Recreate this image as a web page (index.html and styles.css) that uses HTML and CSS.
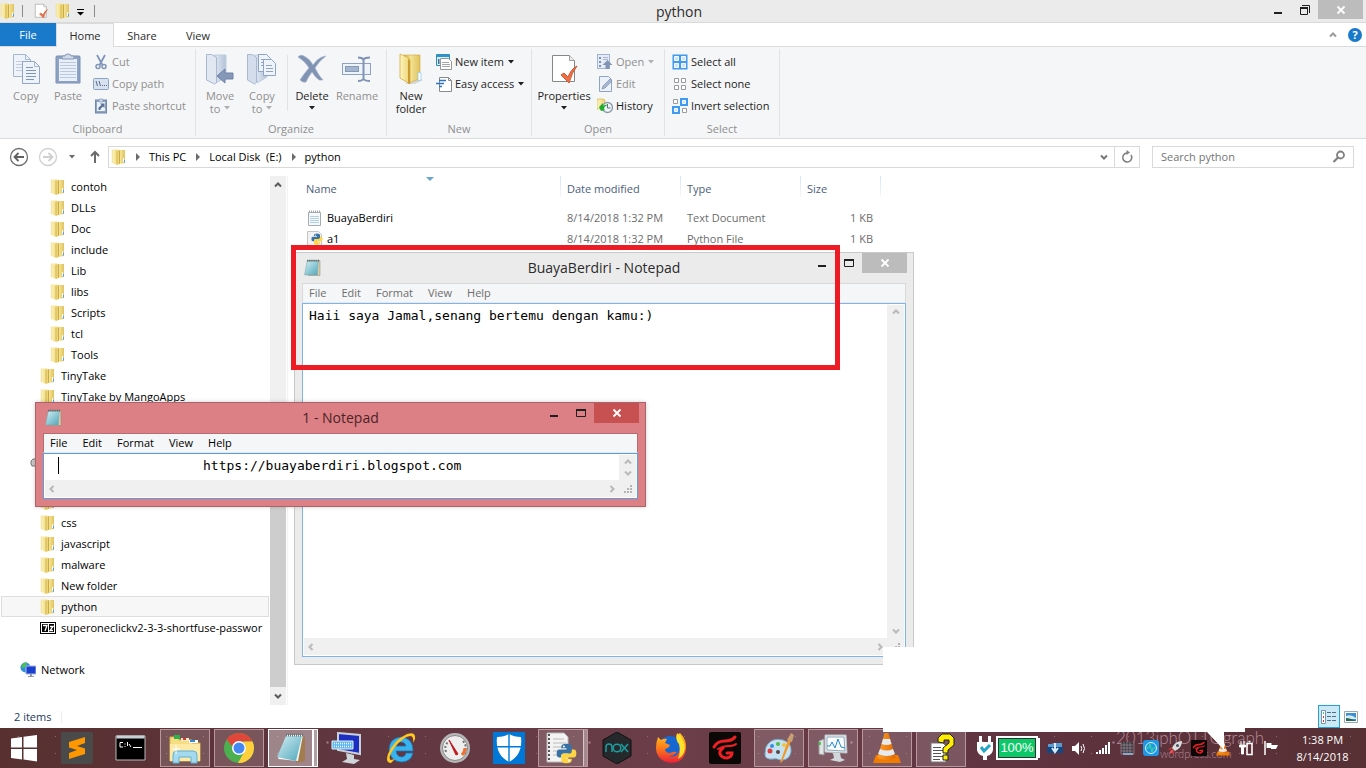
FILE: index.html
```html
<!DOCTYPE html>
<html lang="en">
<head>
<meta charset="utf-8">
<title>python</title>
<link rel="stylesheet" href="styles.css">
</head>
<body>
<svg class="sprite" aria-hidden="true">
  <defs>
    <linearGradient id="gold" x1="0" x2="1"><stop offset="0" stop-color="#fdf5bd"/><stop offset="1" stop-color="#ecd273"/></linearGradient>
    <linearGradient id="gold2" x1="0" x2="1"><stop offset="0" stop-color="#dcbb55"/><stop offset=".4" stop-color="#f4e494"/><stop offset="1" stop-color="#e0c25e"/></linearGradient>
    <linearGradient id="haze" x1="0" x2="1"><stop offset="0" stop-color="#e3eaf4"/><stop offset="1" stop-color="#b4c3d8"/></linearGradient>
    <linearGradient id="glass" x1="0" y1="0" x2="1" y2="1"><stop offset="0" stop-color="#d3f0f5"/><stop offset="1" stop-color="#4fa6ba"/></linearGradient>
    <linearGradient id="cone" x1="0" x2="1"><stop offset="0" stop-color="#ffa02a"/><stop offset="1" stop-color="#e06a00"/></linearGradient>
    <linearGradient id="fire" x1="0" y1="0" x2="0" y2="1"><stop offset="0" stop-color="#ffcf22"/><stop offset=".5" stop-color="#ff7a1a"/><stop offset="1" stop-color="#e8203a"/></linearGradient>
  </defs>
  <symbol id="folder" viewBox="0 0 16 16"><path d="M6 1h8v13l-6 1z" fill="url(#gold2)"/><path d="M1 .5h6l1 1v14l-2 .5-5-2z" fill="url(#gold)"/><path d="M1.200.5v13.500" stroke="#e3cd80" stroke-width=".5"/><path d="M5.500 2h1v13.500l-1-.5z" fill="#d4b54d"/><path d="M8 1.500h1v13l-1 .5z" fill="#cbaa45"/><path d="M12 9h1v4h-1z" fill="#fff"/><path d="M13 11h1v2.500h-1z" fill="#4aa5e0"/></symbol>
  <symbol id="bigfolder" viewBox="0 0 32 32"><path d="M20 24l8 3-8 4-10 0z" fill="#000" opacity=".12"/><path d="M9 2h16v24l-12 4z" fill="url(#gold2)" stroke="#cfa43a" stroke-width=".6"/><path d="M5 1l9 4 1 3v23L5 25z" fill="url(#gold)" stroke="#d3ab41" stroke-width=".8"/><path d="M13 6l2 2v23l-2-1z" fill="#c89a30"/><path d="M23 19l3 1v7l-3 1z" fill="#fff" stroke="#8ac5ee" stroke-width=".7"/></symbol>
  <symbol id="copy" viewBox="0 0 32 32"><g fill="#eef3fa" stroke="#a5b6d0"><path d="M3.500 1.500h12l5 5v17h-17z"/><path d="M15.500 1.500v5h5" fill="none"/><path d="M6 8.500h8M6 11.500h8M6 14.500h8M6 17.500h8" stroke="#c3cfe1"/><path d="M12.500 8.500h12l5 5v17h-17z" stroke="#93a7c5"/><path d="M24.500 8.500v5h5" fill="none"/><path d="M16 14.500h7M16 17.500h10M16 20.500h10M16 23.500h10M16 26.500h8" stroke="#8095b8"/></g></symbol>
  <symbol id="paste" viewBox="0 0 32 32"><path d="M5 3h22q1 0 1 1v26H4V4q0-1 1-1z" fill="#8ea3c3" stroke="#7b91b5"/><path d="M7 6h18v22H7z" fill="#e9eff8"/><path d="M8 9.500h16M8 12.500h16M8 15.500h16M8 18.500h16M8 21.500h16M8 24.500h16" stroke="#bcc9dd"/><path d="M10 6V3h3q0-2 3-2t3 2h3v3z" fill="#d2dbea" stroke="#8296b8"/></symbol>
  <symbol id="cut" viewBox="0 0 16 16"><g fill="none" stroke="#8095b8"><path d="M4 1l5.500 10M12 1L6.500 11" stroke-width="1.800"/><circle cx="5" cy="12.500" r="2" stroke-width="1.500"/><circle cx="11" cy="12.500" r="2" stroke-width="1.500"/></g></symbol>
  <symbol id="path" viewBox="0 0 16 16"><rect x=".5" y="2.500" width="15" height="11" rx="1" fill="#d8e1ee" stroke="#8da1c2"/><path d="M3 5l1.500 5M6 5l1.500 5" stroke="#556b91"/><path d="M9 9.500h1M11 9.500h1M13 9.500h1" stroke="#556b91"/></symbol>
  <symbol id="shortcut" viewBox="0 0 16 16"><rect x="2.500" y="2" width="11" height="13" fill="#8ea3c3" stroke="#7188ad"/><path d="M4 4h8v9H4z" fill="#edf2f9"/><path d="M6 1h4v3H6z" fill="#c6d2e4" stroke="#8095b8" stroke-width=".6"/><path d="M5.500 12V9.500L8.500 7 7 5.500h4.500V10L10 8.500 7.500 11v1z" fill="#5b7299"/></symbol>
  <symbol id="moveto" viewBox="0 0 32 32"><path d="M10 2h12v22l-10 6z" fill="url(#haze)" stroke="#c0ccde"/><path d="M2.500 1.500h5l5 3v25l-2 1.500-8-4z" fill="#e1e8f2" stroke="#a9b9d1"/><path d="M13 23l8-7v4h8v6h-8v4z" fill="#8598b8" stroke="#6c82a8"/></symbol>
  <symbol id="copyto" viewBox="0 0 32 32"><path d="M9 2h12v22l-10 6z" fill="url(#haze)" stroke="#c0ccde"/><path d="M1.500 1.500h5l4 3v25l-2 1.500-7-4z" fill="#d3ddeb" stroke="#a9b9d1"/><g fill="#eff4fa" stroke="#8fa3c2"><path d="M12.500 1.500h8l4 4v13h-12z"/><path d="M15 6.500h6M15 9.500h7M15 12.500h7"/><path d="M17.500 6.500h8l4 4v12h-12z"/><path d="M20 12.500h6M20 15.500h7M20 18.500h7"/></g></symbol>
  <symbol id="delete" viewBox="0 0 32 32"><path d="M2 4q2-3 6-1 6 3 9 9 4-6 9-8l4-1q-7 5-11 12 4 8 8 12l-4 0q-4-3-7-8-4 5-6 10-3 1-6-2 3-5 9-12Q9 8 2 4z" fill="#8093b3" stroke="#a3b2ca" stroke-width=".7"/></symbol>
  <symbol id="rename" viewBox="0 0 32 32"><rect x="1.500" y="10.500" width="28" height="11" fill="#eef3fa" stroke="#8ea1c0"/><rect x="4.500" y="13.500" width="13" height="5" fill="#a4b5cf" stroke="#8397b7"/><path d="M17 4.500q4 0 5.500 2 1.500-2 6.500-2M22.500 5v22M17 28q4 0 5.500-2 1.500 2 6.500 2" fill="none" stroke="#7f93b5" stroke-width="2"/></symbol>
  <symbol id="newitem" viewBox="0 0 16 16"><path d="M.5.500h13v11H.5z" fill="#d8eef8" stroke="#2d8cc0"/><path d="M1 1h12v2H1z" fill="#2f94c9"/><path d="M4.500 4.500h8l3 3v8h-11z" fill="#fff" stroke="#979797"/><path d="M6 8.500h7M6 10.500h8M6 12.500h8" stroke="#8f8f8f" stroke-width=".8"/><path d="M2 5h1.500v5H2z" fill="#4a6f90"/></symbol>
  <symbol id="easy" viewBox="0 0 16 16"><path d="M3.500 1.500h9l3 3v11h-12z" fill="#fff" stroke="#8a8a8a"/><path d="M12.500 1.500v3h3" fill="none" stroke="#8a8a8a"/><path d="M3 4.500h7M0 7.500h8M3 10.500h3" stroke="#2d73c4" stroke-width="1.300"/></symbol>
  <symbol id="props" viewBox="0 0 32 32"><path d="M4.500 2.500h17l5 5v21h-22z" fill="#fff" stroke="#878787"/><path d="M21.500 2.500v5h5" fill="#eee" stroke="#999"/><path d="M13 22l3-2 4 4q3-8 9-11-5 6-8 17z" fill="#ed7045" stroke="#cf582f"/></symbol>
  <symbol id="open" viewBox="0 0 16 16"><rect x=".5" y=".5" width="12" height="14" fill="#e6ecf5" stroke="#a4b4ce"/><path d="M2 3h2v2H2zM2 7h2v2H2zM2 11h2v2H2z" fill="#7b90b4"/><path d="M6 3.500h5M6 5.500h5" stroke="#a9b8d0"/><path d="M10.500 6l5 5h-3v4h-4v-4h-3z" fill="#8194b5"/></symbol>
  <symbol id="edit" viewBox="0 0 16 16"><path d="M2.500.5h9l3 3v12h-12z" fill="#edf2f9" stroke="#8fa3c3"/><path d="M5 13l1-3 7-7 2 2-7 7z" fill="#a8b8d1" stroke="#7b90b3" stroke-width=".7"/></symbol>
  <symbol id="history" viewBox="0 0 16 16"><path d="M0 1h6l2 1v9H0z" fill="url(#gold)" stroke="#d3ab41" stroke-width=".6"/><circle cx="10.500" cy="9.500" r="5" fill="#eef3f6" stroke="#8c9aa5" stroke-width="1.300"/><path d="M10.500 6v4h3" fill="none" stroke="#5f7080"/><path d="M2 9l4-4v3q3-2 5-1-4 1-4 4l1 1-4 1z" fill="#1eae2c"/></symbol>
  <symbol id="selall" viewBox="0 0 16 16"><path d="M.5.5h15v15H.5z" fill="#3f9bef"/><path d="M2.500 2.500h4v4h-4zM9.500 2.500h4v4h-4zM2.500 9.500h4v4h-4zM9.500 9.500h4v4h-4z" fill="#cbe5ff" stroke="#fff"/></symbol>
  <symbol id="selnone" viewBox="0 0 16 16"><path d="M2.500 2.500h4v4h-4zM9.500 2.500h4v4h-4zM2.500 9.500h4v4h-4zM9.500 9.500h4v4h-4z" fill="#fff" stroke="#9b9b9b"/></symbol>
  <symbol id="selinv" viewBox="0 0 16 16"><path d="M1.500 1.500h4v4h-4zM10.500 10.500h4v4h-4z" fill="#fff" stroke="#9b9b9b"/><path d="M8 0h8v8H8zM0 8h8v8H0z" fill="#3f9bef"/><path d="M10.500 2.500h3v3h-3zM2.500 10.500h3v3h-3z" fill="#cbe5ff" stroke="#fff"/></symbol>
  <symbol id="note" viewBox="0 0 16 16"><path d="M4 1.500h11v14H4z" fill="#d9cfae" stroke="#8c8470" stroke-width=".5"/><path d="M3 2h10.500L12.500 15H.5z" fill="url(#glass)" stroke="#78a6ae" stroke-width=".5"/><path d="M3 1.500h11" stroke="#425c63" stroke-width="1.500" stroke-dasharray="1 1"/></symbol>
  <symbol id="txt" viewBox="0 0 16 16"><path d="M1.500 2.500h12v13h-12z" fill="#f5f9fc" stroke="#a5abaf"/><path d="M3 6.500h9M3 8.500h9M3 10.500h9M3 12.500h9" stroke="#9fc3da" stroke-width=".8"/><path d="M2 1.500h11" stroke="#a5a5a5" stroke-width="2" stroke-dasharray="1 1"/></symbol>
  <symbol id="snake" viewBox="0 0 16 16"><path d="M8 .5q4 0 4 2.500v3q0 2-2 2H6Q4 8 4 10v1H2.500Q.5 11 .5 8t2-3H8V4H4V3Q4 .5 8 .5z" fill="#3872a5"/><path d="M8 15.500q-4 0-4-2.500v-3q0-2 2-2h4q2 0 2-2V5h1.500q2 0 2 3t-2 3H8v1h4v1q0 2.500-4 2.500z" fill="#ffd544"/><circle cx="6" cy="2.700" r=".8" fill="#fff"/><circle cx="10" cy="13.300" r=".8" fill="#fff"/></symbol>
  <symbol id="vlc" viewBox="0 0 32 32"><path d="M5 23h22l3 8H2z" fill="#f07c00"/><path d="M13.500 1h4l7 25q-9 4-18 0z" fill="url(#cone)"/><path d="M12 7h7l1.500 5q-5 2-10 0zM9 17q7 3 13 0l2 5q-8 4-17 0z" fill="#e5ebef"/></symbol>
  <symbol id="garena" viewBox="0 0 32 32"><rect width="32" height="32" rx="2" fill="#0c0808"/><g fill="none" stroke="#ed2024" stroke-linecap="round"><path d="M5 15q3-6 11-6 7 0 10-4" stroke-width="3"/><path d="M9 17q5-3 10-3 6 0 8-2" stroke-width="2"/><path d="M14 16q-4 3-3 6 2 4 7 4 5-1 5-5h-5" stroke-width="3"/></g></symbol>
  <symbol id="up" viewBox="0 0 8 6"><path d="M1 4.500l3-3 3 3" fill="none" stroke="currentColor" stroke-width="2"/></symbol>
  <symbol id="down" viewBox="0 0 8 6"><path d="M1 1.500l3 3 3-3" fill="none" stroke="currentColor" stroke-width="2"/></symbol>
  <symbol id="left" viewBox="0 0 6 8"><path d="M4.500 1l-3 3 3 3" fill="none" stroke="currentColor" stroke-width="2"/></symbol>
  <symbol id="right" viewBox="0 0 6 8"><path d="M1.500 1l3 3-3 3" fill="none" stroke="currentColor" stroke-width="2"/></symbol>
  <symbol id="caret" viewBox="0 0 6 4"><path d="M0 0h6L3 3.500z" fill="currentColor"/></symbol>
  <symbol id="crumb" viewBox="0 0 4 8"><path d="M0 0l4 4-4 4z" fill="#6b6b6b"/></symbol>
  <symbol id="min" viewBox="0 0 10 10"><path d="M1 7h8v2H1z" fill="#1f1f1f"/></symbol>
  <symbol id="max" viewBox="0 0 10 10"><path d="M.5 1.500h9v7h-9z" fill="none" stroke="#1f1f1f"/><path d="M0 1h10v2H0z" fill="#1f1f1f"/></symbol>
  <symbol id="restore" viewBox="0 0 10 10"><path d="M2 .5h7.500V8" fill="none" stroke="#1f1f1f"/><path d="M.5 2.500h7v7h-7z" fill="none" stroke="#1f1f1f"/><path d="M0 2h8v2H0z" fill="#1f1f1f"/></symbol>
  <symbol id="close" viewBox="0 0 10 10"><path d="M1.500 1.500l7 7M8.500 1.500l-7 7" stroke="#fff" stroke-width="1.800"/></symbol>
  <symbol id="grip" viewBox="0 0 10 10"><path d="M7 1h2v2H7zM4 4h2v2H4zM7 4h2v2H7zM1 7h2v2H1zM4 7h2v2H4zM7 7h2v2H7z" fill="#b5b5b5"/></symbol>
</svg>

<div class="explorer">
  <header class="titlebar">
    <div class="quick">
      <svg class="i16"><use href="#folder"/></svg><i class="bar"></i>
      <button aria-label="Properties"><svg class="i16"><use href="#props"/></svg></button>
      <button aria-label="New folder"><svg class="i16"><use href="#folder"/></svg></button>
      <button class="custom" aria-label="Customize"><svg class="i8" viewBox="0 0 8 8"><path d="M0 1.500h7" stroke="#000"/><path d="M0 4h7L3.500 7.500z"/></svg></button><i class="bar"></i>
    </div>
    <h1 class="title">python</h1>
    <div class="winbtns">
      <button aria-label="Minimize"><svg class="i10"><use href="#min"/></svg></button>
      <button aria-label="Restore"><svg class="i10"><use href="#restore"/></svg></button>
      <button class="close grey" aria-label="Close"><svg class="i10"><use href="#close"/></svg></button>
    </div>
  </header>
  <nav class="tabs">
    <button class="tab file">File</button><button class="tab active">Home</button><button class="tab">Share</button><button class="tab">View</button>
    <div class="help"><button aria-label="Collapse ribbon"><svg class="chev"><use href="#up"/></svg></button><button class="q" aria-label="Help">?</button></div>
  </nav>
  <section class="ribbon">
    <div class="group clipboard">
      <div class="tools">
        <button class="big off"><svg class="i32"><use href="#copy"/></svg>Copy</button>
        <button class="big off"><svg class="i32"><use href="#paste"/></svg>Paste</button>
        <div class="col">
          <button class="small off"><svg class="i16"><use href="#cut"/></svg>Cut</button>
          <button class="small off"><svg class="i16"><use href="#path"/></svg>Copy path</button>
          <button class="small off"><svg class="i16"><use href="#shortcut"/></svg>Paste shortcut</button>
        </div>
      </div>
      <div class="label">Clipboard</div>
    </div>
    <div class="group organize">
      <div class="tools">
        <button class="big off"><svg class="i32"><use href="#moveto"/></svg>Move<span>to <svg class="caret"><use href="#caret"/></svg></span></button>
        <button class="big off"><svg class="i32"><use href="#copyto"/></svg>Copy<span>to <svg class="caret"><use href="#caret"/></svg></span></button>
        <i class="rule"></i>
        <button class="big"><svg class="i32"><use href="#delete"/></svg>Delete<span><svg class="caret"><use href="#caret"/></svg></span></button>
        <button class="big wide off"><svg class="i32"><use href="#rename"/></svg>Rename</button>
      </div>
      <div class="label">Organize</div>
    </div>
    <div class="group new">
      <div class="tools">
        <button class="big"><svg class="i32"><use href="#bigfolder"/></svg>New<span>folder</span></button>
        <div class="col">
          <button class="small"><svg class="i16"><use href="#newitem"/></svg>New item <svg class="caret"><use href="#caret"/></svg></button>
          <button class="small"><svg class="i16"><use href="#easy"/></svg>Easy access <svg class="caret"><use href="#caret"/></svg></button>
        </div>
      </div>
      <div class="label">New</div>
    </div>
    <div class="group opens">
      <div class="tools">
        <button class="big wider"><svg class="i32"><use href="#props"/></svg>Properties<span><svg class="caret"><use href="#caret"/></svg></span></button>
        <div class="col">
          <button class="small off"><svg class="i16"><use href="#open"/></svg>Open <svg class="caret"><use href="#caret"/></svg></button>
          <button class="small off"><svg class="i16"><use href="#edit"/></svg>Edit</button>
          <button class="small"><svg class="i16"><use href="#history"/></svg>History</button>
        </div>
      </div>
      <div class="label">Open</div>
    </div>
    <div class="group select">
      <div class="tools">
        <div class="col">
          <button class="small"><svg class="i16"><use href="#selall"/></svg>Select all</button>
          <button class="small"><svg class="i16"><use href="#selnone"/></svg>Select none</button>
          <button class="small"><svg class="i16"><use href="#selinv"/></svg>Invert selection</button>
        </div>
      </div>
      <div class="label">Select</div>
    </div>
  </section>
  <div class="navbar">
    <button aria-label="Back"><svg class="i20" viewBox="0 0 20 20"><circle cx="10" cy="10" r="8.500" fill="none" stroke="#707070" stroke-width="1.300"/><path d="M15 10H6M9.500 6l-4 4 4 4" fill="none" stroke="#606060" stroke-width="1.800"/></svg></button>
    <button class="fwd" aria-label="Forward"><svg class="i20" viewBox="0 0 20 20"><circle cx="10" cy="10" r="8.500" fill="none" stroke="#d0d0d0" stroke-width="1.300"/><path d="M5 10h9M10.500 6l4 4-4 4" fill="none" stroke="#cfcfcf" stroke-width="1.800"/></svg></button>
    <button class="recent" aria-label="Recent locations"><svg class="caret"><use href="#caret"/></svg></button>
    <button class="upbtn" aria-label="Up"><svg class="i16" viewBox="0 0 16 16"><path d="M8 14V3M4 7l4-4 4 4" fill="none" stroke="#6a6a6a" stroke-width="2"/></svg></button>
    <div class="address">
      <svg class="i16"><use href="#folder"/></svg>
      <svg class="crumb"><use href="#crumb"/></svg><a href="#pc">This PC</a>
      <svg class="crumb"><use href="#crumb"/></svg><a href="#e">Local Disk &nbsp;(E:)</a>
      <svg class="crumb"><use href="#crumb"/></svg><a href="#python">python</a>
      <button class="drop" aria-label="Previous locations"><svg class="chev"><use href="#down"/></svg></button>
      <button class="refresh" aria-label="Refresh"><svg class="i16" viewBox="0 0 16 16"><path d="M12 6a4.500 4.500 0 1 1-4-2" fill="none" stroke="#808080" stroke-width="1.600"/><path d="M7.500 1v5L11 3.500z" fill="#808080"/></svg></button>
    </div>
    <label class="search"><input type="text" placeholder="Search python" aria-label="Search python"><svg class="i16" viewBox="0 0 16 16"><circle cx="9.500" cy="6" r="3.500" fill="none" stroke="#7e7e7e" stroke-width="1.800"/><path d="M7 8.500l-4.500 4.500" stroke="#7e7e7e" stroke-width="2.200"/></svg></label>
  </div>
  <main class="body">
    <div class="tree">
      <ul>
        <li class="deep"><a href="#"><svg class="i16"><use href="#folder"/></svg>contoh</a></li>
        <li class="deep"><a href="#"><svg class="i16"><use href="#folder"/></svg>DLLs</a></li>
        <li class="deep"><a href="#"><svg class="i16"><use href="#folder"/></svg>Doc</a></li>
        <li class="deep"><a href="#"><svg class="i16"><use href="#folder"/></svg>include</a></li>
        <li class="deep"><a href="#"><svg class="i16"><use href="#folder"/></svg>Lib</a></li>
        <li class="deep"><a href="#"><svg class="i16"><use href="#folder"/></svg>libs</a></li>
        <li class="deep"><a href="#"><svg class="i16"><use href="#folder"/></svg>Scripts</a></li>
        <li class="deep"><a href="#"><svg class="i16"><use href="#folder"/></svg>tcl</a></li>
        <li class="deep"><a href="#"><svg class="i16"><use href="#folder"/></svg>Tools</a></li>
        <li><a href="#"><svg class="i16"><use href="#folder"/></svg>TinyTake</a></li>
        <li><a href="#"><svg class="i16"><use href="#folder"/></svg>TinyTake by MangoApps</a></li>
        <li></li><li></li>
        <li class="drive"><svg class="i16" viewBox="0 0 16 16"><path d="M1 9l2-2h12v6l-2 1H2l-1-2z" fill="#c8c8c8" stroke="#777"/></svg></li>
        <li></li>
        <li><svg class="i16"><use href="#folder"/></svg></li>
        <li><a href="#"><svg class="i16"><use href="#folder"/></svg>css</a></li>
        <li><a href="#"><svg class="i16"><use href="#folder"/></svg>javascript</a></li>
        <li><a href="#"><svg class="i16"><use href="#folder"/></svg>malware</a></li>
        <li><a href="#"><svg class="i16"><use href="#folder"/></svg>New folder</a></li>
        <li class="current"><a href="#"><svg class="i16"><use href="#folder"/></svg>python</a></li>
        <li><a href="#"><svg class="i16" viewBox="0 0 16 16"><rect x=".5" y="2.500" width="15" height="11" fill="#fff" stroke="#000"/><path d="M2 4h6v8H2zM9 4h5v8H9z"/><path d="M3 5.500h4L5 11M10 6.500h3L10 10.500h3" fill="none" stroke="#fff" stroke-width="1.300"/></svg>superoneclickv2-3-3-shortfuse-passwor</a></li>
        <li></li>
        <li class="root"><a href="#"><svg class="i16" viewBox="0 0 16 16"><circle cx="5.500" cy="5.500" r="5" fill="#2f8fd8"/><path d="M2 3q3-4 5-2L5 5 2 6zM6 7l3-3v5L6 10z" fill="#4dc34b"/><path d="M6 4h10v8H6z" fill="#1a3fd0" stroke="#aab8d8"/><path d="M10 12h2v2h2v1H8v-1h2z" fill="#8d98ad"/></svg>Network</a></li>
      </ul>
    </div>
    <div class="scroll">
      <button aria-label="Scroll up"><svg class="chev"><use href="#up"/></svg></button><i class="track"></i><i class="thumb"></i><button aria-label="Scroll down"><svg class="chev"><use href="#down"/></svg></button>
    </div>
    <div class="files">
      <table>
        <colgroup><col class="c-name"><col class="c-date"><col class="c-type"><col class="c-size"></colgroup>
        <thead><tr><th>Name<svg class="sort" viewBox="0 0 8 4"><path d="M0 0h8L4 4z" fill="#6aa5cc"/></svg></th><th>Date modified</th><th>Type</th><th>Size</th></tr></thead>
        <tbody>
          <tr><td><span class="fname"><svg class="i16"><use href="#txt"/></svg>BuayaBerdiri</span></td><td>8/14/2018 1:32 PM</td><td>Text Document</td><td class="num">1 KB</td></tr>
          <tr><td><span class="fname"><svg class="i16" viewBox="0 0 16 16"><path d="M.5.500h11l3 3v12H.5z" fill="#f2f2f2" stroke="#c4c4c4"/><use href="#snake" x="4" y="2" width="12" height="12"/></svg>a1</span></td><td>8/14/2018 1:32 PM</td><td>Python File</td><td class="num">1 KB</td></tr>
        </tbody>
      </table>
    </div>
  </main>
  <footer class="status">
    <span>2 items</span>
    <div class="views">
      <button class="on" aria-label="Details"><svg class="i16" viewBox="0 0 16 16"><path d="M.5 1.500h4v13h-4z" fill="#fff" stroke="#7896ac"/><path d="M2 3h1v2H2z" fill="#4c6"/><path d="M2 7h1v2H2zM2 11h1v2H2z" fill="#d33"/><path d="M6 3.500h4M11 3.500h4M6 7.500h4M11 7.500h4M6 11.500h4M11 11.500h4" stroke="#506f83"/></svg></button>
      <button aria-label="Large icons"><svg class="i16" viewBox="0 0 16 16"><path d="M1.500 2.500h13v11h-13z" fill="#fff" stroke="#9ba7b0"/><path d="M3 4h10v8H3z" fill="#3b8fd2"/><path d="M3 7q5-2 10 2v1H3z" fill="#d6edf6"/><path d="M3 9q4 0 10 3H3z" fill="#27685a"/></svg></button>
    </div>
  </footer>
</div>

<section class="notepad back">
  <header><svg class="i18"><use href="#note"/></svg><h2>BuayaBerdiri - Notepad</h2>
    <div class="winbtns"><button aria-label="Minimize"><svg class="i10"><use href="#min"/></svg></button><button aria-label="Maximize"><svg class="i10"><use href="#max"/></svg></button><button class="close grey" aria-label="Close"><svg class="i10"><use href="#close"/></svg></button></div></header>
  <div class="menu"><button>File</button><button>Edit</button><button>Format</button><button>View</button><button>Help</button></div>
  <div class="edit">
    <textarea aria-label="BuayaBerdiri text" spellcheck="false">Haii saya Jamal,senang bertemu dengan kamu:)</textarea>
    <div class="vs"><svg class="chev"><use href="#up"/></svg><svg class="chev"><use href="#down"/></svg></div>
    <div class="hs"><svg class="side"><use href="#left"/></svg><svg class="side"><use href="#right"/></svg></div>
    <div class="corner"><svg class="i10"><use href="#grip"/></svg></div>
  </div>
</section>

<div class="cover"></div>
<div class="marker"></div>

<section class="notepad front">
  <header><svg class="i18"><use href="#note"/></svg><h2>1 - Notepad</h2>
    <div class="winbtns"><button aria-label="Minimize"><svg class="i10"><use href="#min"/></svg></button><button aria-label="Maximize"><svg class="i10"><use href="#max"/></svg></button><button class="close red" aria-label="Close"><svg class="i10"><use href="#close"/></svg></button></div></header>
  <div class="menu"><button>File</button><button>Edit</button><button>Format</button><button>View</button><button>Help</button></div>
  <div class="edit">
    <textarea aria-label="1 text" spellcheck="false">https://buayaberdiri.blogspot.com</textarea><i class="cursor"></i>
    <div class="vs"><svg class="chev"><use href="#up"/></svg><svg class="chev"><use href="#down"/></svg></div>
    <div class="hs"><svg class="side"><use href="#left"/></svg><svg class="side"><use href="#right"/></svg></div>
    <div class="corner"><svg class="i10"><use href="#grip"/></svg></div>
  </div>
</section>

<footer class="taskbar">
  <div class="tasks">
    <button class="start" aria-label="Start"><svg viewBox="0 0 32 32"><path d="M3 6.500l11-1.500v10.500H3zM15.500 4.800L29 3v12.500H15.500zM3 17h11v10.500L3 26zM15.500 17H29v12.500l-13.500-2z" fill="#fff"/></svg></button>
    <button aria-label="Sublime Text"><svg viewBox="0 0 32 32"><rect width="32" height="32" rx="2" fill="#4a4a4a"/><path d="M8 10l16-5v6l-8 3 8 2.500V22L8 27v-6l8-3-8-2.500z" fill="#ff9800"/></svg></button>
    <button aria-label="Command Prompt"><svg viewBox="0 0 32 32"><path d="M1 4h29v24H1z" fill="#000" stroke="#b8b8b8"/><path d="M1.500 3.500h28v3h-28z" fill="#c9d0d6"/><path d="M8 10.500H5v4.500h3M10 11.500v1M10 14v1M12.500 10v4M14 12l2 3" fill="none" stroke="#fff"/><path d="M18 15.500h9" stroke="#fff"/></svg></button>
    <button class="run" aria-label="File Explorer"><svg viewBox="0 0 32 32"><path d="M1 5h9v3h13v3h8v18H1z" fill="#f7dd82" stroke="#d7b24a"/><path d="M5 3h6v4H5z" fill="#2bb24c"/><path d="M12 6h8v3h-8z" fill="#f3ecc8"/><path d="M14 6h3v2h-3z" fill="#d33"/><path d="M20 8h9v3h-9z" fill="#fff"/><path d="M21 8h5v2h-5z" fill="#2e8fd8"/><path d="M1 12h30v17H1z" fill="#fbe9a5"/><path d="M4 31V23q0-4 4-4h16q4 0 4 4v8h-6v-6H10v6z" fill="#a3daf0" stroke="#61afd6"/><path d="M7 13v9M3 17h8" stroke="#fff"/></svg></button>
    <button class="run" aria-label="Chrome"><svg viewBox="0 0 32 32"><circle cx="16" cy="16" r="15" fill="#4caf50"/><path d="M16 1a15 15 0 0 1 13.500 8.500H16a7 7 0 0 0-6.500 5L3.500 7.500A15 15 0 0 1 16 1z" fill="#e0463a"/><path d="M29.500 9.500A15 15 0 0 1 15 31l6.500-11.500q3-5-1.500-10z" fill="#ffd03c"/><circle cx="16" cy="16" r="7" fill="#fff"/><circle cx="16" cy="16" r="5.500" fill="#4688f1"/></svg></button>
    <button class="run focus stack" aria-label="Notepad"><svg viewBox="0 0 32 32"><path d="M23 4l7 1v24l-9 2z" fill="#a27c4c"/><path d="M12 3h16l-5 26-20-2z" fill="#f2f6f4"/><path d="M11 4h16l-6 25-19-4z" fill="url(#glass)"/><path d="M11 3h17" stroke="#67777b" stroke-width="3" stroke-dasharray="1 1"/></svg></button>
    <button aria-label="On-screen keyboard"><svg viewBox="0 0 32 32"><path d="M7 1l22 2v19L7 18z" fill="#1c2fc0" stroke="#c9d0d8" stroke-width="2"/><path d="M15 21l8 2v4l6 1-6 4-12-2 5-3z" fill="#cfd5da"/><path d="M1 9h21v8H1z" fill="#5fb8f0" stroke="#e6f4fc"/><path d="M3 11.500h17M3 14.500h17" stroke="#fff" stroke-width="1.500" stroke-dasharray="1 1"/></svg></button>
    <button aria-label="Internet Explorer"><svg viewBox="0 0 32 32"><path d="M28 21q-2 9-12 9Q5 29 4 17 5 6 16 5q12 1 12 14H11q1 6 6 6 3 0 4-4zM11 14h10q-1-4-5-4-4 0-5 4z" fill="#39b3ee" stroke="#1a77b9" stroke-width=".8"/><path d="M6 31q-6 0-3-9Q9 8 22 2q9-3 8 5l-2 4q1-7-3-7Q18 5 10 15 2 26 6 28l4-1z" fill="#ffc821"/></svg></button>
    <button aria-label="Gauge"><svg viewBox="0 0 32 32"><circle cx="16" cy="16" r="15" fill="#b8b8b8"/><circle cx="16" cy="16" r="12.500" fill="#eee" stroke="#888"/><path d="M7 20q-2-6 2-10M24 9q5 6 1 14" fill="none" stroke="#777" stroke-width="2" stroke-dasharray="2 2"/><path d="M26 16q0 4-3 7" fill="none" stroke="#f07030" stroke-width="3"/><path d="M10 8l9 14-2 1z" fill="#c4161c" stroke="#c4161c"/></svg></button>
    <button aria-label="Defender"><svg viewBox="0 0 32 32"><path d="M0 0h32v32H0z" fill="#0078d7"/><path d="M16 2q5 3 12 3 2 18-12 25Q2 23 4 5q7 0 12-3z" fill="#fff"/><path d="M15.300 2h1.400v28h-1.400zM3 14h26v1.400H3z" fill="#0078d7"/></svg></button>
    <button class="run stack" aria-label="Python"><svg viewBox="0 0 32 32"><path d="M2 1h17l4 4v25H2z" fill="#f3f3f3" stroke="#bbb"/><path d="M4 2v27" stroke="#555" stroke-width="2" stroke-dasharray="2 2"/><path d="M8 7h11M8 11h13M8 15h9M8 19h6M8 23h5" stroke="#bbb"/><use href="#snake" x="11" y="11" width="21" height="21"/></svg></button>
    <button aria-label="Nox"><svg viewBox="0 0 32 32"><path d="M16 0l14 8v16l-14 8-14-8V8z" fill="#26292c" stroke="#111"/><g fill="none" stroke="#1e9ea0" stroke-width="1.500"><path d="M5 20v-5q0-3 3-3t3 3v5"/><circle cx="16" cy="16" r="3.800"/><path d="M20 12l7 8M27 12l-7 8"/></g></svg></button>
    <button aria-label="Firefox"><svg viewBox="0 0 32 32"><circle cx="15" cy="15" r="11" fill="#1767d2"/><path d="M3 5l3 3q3-2 6-1l-2 4 5 2q-1 3-5 4 0 4 5 4 4-2 7-1-3 4-8 4 7 2 10-4 3-7-2-13-2-4 3-6 7 7 6 16-2 14-15 14Q2 29 1 17 1 10 3 5z" fill="url(#fire)"/><path d="M22 1q8 7 8 15-1 8-7 11 3-7 1-15-4-4-2-11z" fill="#ffe229"/></svg></button>
    <button aria-label="Garena"><svg><use href="#garena"/></svg></button>
    <button class="run" aria-label="Paint"><svg viewBox="0 0 32 32"><path d="M3 15Q8 5 20 8q9 3 8 12-2 9-11 8-4-2-7-1-9 1-8-6z" fill="#c5e2f2" stroke="#7aa7c4"/><circle cx="9" cy="14" r="2" fill="#3a8ee0"/><circle cx="15" cy="12" r="2" fill="#58b947"/><circle cx="21" cy="13" r="2" fill="#f4c33d"/><circle cx="7" cy="19" r="2.500" fill="#df3b3b"/><circle cx="15" cy="20" r="2" fill="#57474d"/><path d="M25 8l3 1-9 21-2 1z" fill="#f09a2c"/><path d="M24 8l4-7 3 2-2 7z" fill="#c9a071"/></svg></button>
    <button class="run" aria-label="Performance"><svg viewBox="0 0 32 32"><path d="M2 9l5-2v16l-5-1z" fill="#dfe4e4" stroke="#999"/><path d="M2 10h2v3H2z" fill="#4c4"/><path d="M8 3h21l1 18-22-1z" fill="#e8edf0" stroke="#bcc3c8"/><path d="M10 5h17l1 14-18-1z" fill="#f8fcff" stroke="#8ea7b8"/><path d="M10 14h3l2-4 3 6 3-9 3 8 4 1" fill="none" stroke="#2389cf"/><path d="M16 21h7l1 5 4 2-5 2-10-2 4-2z" fill="#d0d6da"/></svg></button>
    <button class="run" aria-label="VLC"><svg><use href="#vlc"/></svg></button>
    <button class="run" aria-label="Help file"><svg viewBox="0 0 32 32"><path d="M6 11h12l3 3v16H6z" fill="#fff" stroke="#777"/><path d="M8 15.500h8M8 18.500h10M8 21.500h8M8 24.500h10M8 27.500h7" stroke="#555"/><path d="M13 10V6l4-4h8l4 4v7l-6 5v3h-5v-5l6-5V8h-5v3zM18 23h5v5h-5z" fill="#ffee00" stroke="#222"/></svg></button>
  </div>
  <div class="tray">
    <svg class="plug" viewBox="0 0 18 26"><path d="M3 1h3v6h6V1h3v6h2v8q-1 5-6 6v4H7v-4Q2 20 1 15V7h2z" fill="#fff"/><path d="M5 12l3 4 6-6" fill="none" stroke="#22a4c8" stroke-width="3"/></svg>
    <span class="battery">100%</span>
    <div class="icons">
      <svg viewBox="0 0 16 16"><path d="M1 4h4l1-1h9v10H1z" fill="#5a9bd0"/><path d="M0 7h16v6H0z" fill="#12477f"/><path d="M8 3v8M5 8l3 4 3-4" fill="none" stroke="#d8ecff" stroke-width="2"/></svg>
      <svg viewBox="0 0 16 16"><path d="M1 6h3l4-4v13l-4-4H1z" fill="#fff"/><path d="M10 6q1.500 2.500 0 5M12 4q3 4.500 0 9" fill="none" stroke="#fff"/></svg>
      <svg viewBox="0 0 16 16"><path d="M1 12h2v2H1zM4 10h2v4H4zM7 8h2v6H7zM10 5h2v9h-2zM13 2h2v12h-2z" fill="#fff"/></svg>
      <svg viewBox="0 0 16 16"><path d="M2 2h12v11H2z" fill="#403a42"/><path d="M2 2v12h13V2M2 5h12M2 8h12M2 11h12M5 2v11M8 2v11M11 2v11" fill="none" stroke="#998d95" stroke-width=".7"/><path d="M4 14h10" stroke="#8ecaee" stroke-width="1.500"/></svg>
      <svg viewBox="0 0 16 16"><rect width="16" height="16" rx="3" fill="#1e98e4"/><circle cx="8" cy="8" r="5.500" fill="none" stroke="#d8f4ff"/><path d="M3 8h3l1-4 2 8 1-4h3" fill="none" stroke="#37dd9a"/></svg>
      <svg viewBox="0 0 16 16"><path d="M15 1q-7 0-10 7l3 3q7-3 7-10z" fill="#ddd"/><path d="M5 7l-4 2 3 1zM8 11l-2 4-1-3z" fill="#c33"/><circle cx="10.500" cy="5.500" r="1.500" fill="#456"/><path d="M3 13l3-3" stroke="#e55" stroke-width="2"/></svg>
      <svg><use href="#garena"/></svg>
      <svg><use href="#vlc"/></svg>
      <svg viewBox="0 0 16 16"><path d="M8 3.500h5v11H8zM9.500 1.500h2" fill="none" stroke="#fff" stroke-width="1.600"/><path d="M2 1v4M5 1v4M.5 5h6v2H4.500v7h-2V7h-2z" fill="#fff" stroke="#fff"/></svg>
      <svg viewBox="0 0 16 16"><path d="M2 1v14" stroke="#fff" stroke-width="1.500"/><path d="M3.500 3h5v2H15l-2 4H8V8H3.500z" fill="#fff"/></svg>
    </div>
    <div class="clock"><time>1:38 PM</time><span>8/14/2018</span></div>
    <div class="wall" aria-hidden="true"><span>2013iphOTTOgraph</span><small>wordpress.com</small></div>
  </div>
</footer>
</body>
</html>
```
FILE: styles.css
```css
* { box-sizing: border-box; }
body { margin: 0; height: 100vh; display: flex; flex-direction: column; position: relative; overflow: hidden; background: #fff; color: #000; font: 11px/16px "Open Sans", "Noto Sans", sans-serif; }
button { margin: 0; padding: 0; border: 0; background: none; font: inherit; color: inherit; }
h1, h2 { margin: 0; font-size: 14px; font-weight: 400; line-height: 20px; color: #2b2b2b; }
a { color: inherit; text-decoration: none; }
svg { display: block; flex: none; }
.sprite { position: absolute; width: 0; height: 0; }
.i8 { width: 8px; height: 8px; }
.i10 { width: 10px; height: 10px; }
.i16 { width: 16px; height: 16px; }
.i18 { width: 17px; height: 17px; }
.i20 { width: 20px; height: 20px; }
.i32 { width: 32px; height: 32px; }
.chev { width: 8px; height: 6px; }
.side { width: 6px; height: 8px; }
.caret { width: 6px; height: 4px; }

.explorer { flex: 1; min-height: 0; display: flex; flex-direction: column; }
.titlebar { display: grid; grid-template-columns: 1fr auto 1fr; height: 23px; background: #ebebeb; border-bottom: 1px solid #d9dadb; }
.quick { display: flex; align-items: center; gap: 6px; }
.bar { width: 1px; height: 12px; background: #8a8a8a; }
.quick .bar { margin-right: 4px; }
.custom { padding: 2px 3px 0 0; }
.title { align-self: center; padding-right: 8px; padding-top: 2px; }
.winbtns { display: flex; align-items: start; justify-content: end; }
.winbtns button { width: 27px; height: 20px; display: grid; place-items: center; }
.winbtns .close { width: 45px; }
.titlebar .winbtns { padding-right: 3px; }
.titlebar .close { height: 19px; }
.grey { background: #bcbcbc; }
.red { background: #c75050; }

.tabs { display: flex; height: 24px; border-bottom: 1px solid #dadbdc; }
.tab { width: 56px; height: 24px; color: #2b2b2b; padding-top: 2px; }
.tab.file { background: #1979ca; color: #fff; height: 23px; padding: 0; }
.tab.active { width: 58px; padding-top: 0; background: #f5f6f7; border: 1px solid #dadbdc; border-bottom: 0; }
.help { margin-left: auto; display: flex; align-items: center; gap: 11px; padding-right: 4px; color: #9b9b9b; }
.q { width: 14px; height: 14px; border-radius: 50%; background: #1979ca; color: #fff; font-weight: 700; line-height: 14px; }

.ribbon { display: flex; height: 92px; background: #f5f6f7; border-bottom: 1px solid #dadbdc; padding: 2px 0; color: #1e1e1e; }
.group { display: flex; flex-direction: column; border-right: 1px solid #e2e3e4; }
.tools { flex: 1; display: flex; padding: 2px 3px 0; }
.label { height: 15px; text-align: center; color: #8f8f8f; }
.big { width: 42px; display: flex; flex-direction: column; align-items: center; line-height: 13px; padding-top: 2px; }
.big .i32 { margin-bottom: 4px; }
.big span { display: flex; align-items: center; justify-content: center; gap: 4px; height: 12px; }
.wide { width: 48px; }
.wider { width: 58px; }
.rule { width: 1px; height: 56px; margin: 4px 3px 0 4px; background: #e2e3e4; }
.col { display: flex; flex-direction: column; margin-left: 4px; }
.small { display: flex; align-items: center; gap: 3px; height: 22px; white-space: nowrap; }
.small .caret { margin-left: 1px; }
.off { color: #8f8f8f; }
.off .caret { color: #b0b0b0; }
.clipboard { width: 196px; }
.clipboard .tools { padding-left: 5px; }
.organize { width: 191px; }
.new { width: 145px; }
.opens { width: 133px; }
.select { width: 115px; }

.navbar { display: flex; align-items: center; height: 37px; padding: 0 12px 2px 9px; }
.fwd { margin-left: 9px; }
.recent { margin: 0 12px 0 11px; color: #6b6b6b; }
.upbtn { margin-right: 5px; }
.address { flex: 1; display: flex; align-items: center; height: 22px; border: 1px solid #d9d9d9; padding-left: 2px; }
.crumb { width: 4px; height: 8px; margin: 0 9px; }
.address a + .crumb { margin: 0 9px 0 10px; }
.drop { margin-left: auto; width: 20px; height: 20px; display: grid; place-items: center; color: #777; }
.refresh { width: 25px; height: 20px; display: grid; place-items: center; border-left: 1px solid #d9d9d9; }
.search { width: 202px; height: 22px; margin-left: 12px; display: flex; align-items: center; border: 1px solid #d9d9d9; padding: 0 6px 0 8px; }
.search input { flex: 1; min-width: 0; border: 0; padding: 0; font: inherit; outline: 0; }
.search input::placeholder { color: #757575; opacity: 1; }

.body { flex: 1; min-height: 0; display: flex; }
.tree { width: 270px; overflow: hidden; }
.tree ul { list-style: none; margin: 0; padding: 0; }
.tree li { height: 21px; margin: 0 1px; padding-left: 39px; display: flex; align-items: center; white-space: nowrap; overflow: hidden; }
.tree a { display: flex; align-items: center; gap: 5px; }
.tree .deep { padding-left: 49px; }
.tree .drive { padding-left: 29px; }
.tree .root { padding-left: 19px; }
.tree .current { padding-left: 38px; border: 1px solid #dedede; background: #f7f7f7; }
.scroll { width: 18px; border-right: 1px solid #f3f3f3; display: flex; flex-direction: column; color: #5a5a5a; }
.scroll button { width: 16px; height: 18px; background: #f0f0f0; display: grid; place-items: center; }
.track { flex: 246; width: 16px; background: #f0f0f0; }
.thumb { flex: 248; width: 16px; background: #cdcdcd; }
.files { flex: 1; padding-left: 13px; }
table { table-layout: fixed; width: 580px; border-collapse: collapse; color: #6d6d6d; }
.c-name { width: 260px; }
.c-date, .c-type { width: 120px; }
.c-size { width: 80px; }
th { position: relative; height: 21px; padding: 4px 0 0 6px; font-weight: 400; text-align: left; color: #4c607a; background: linear-gradient(#d5e6f7, #f2f7fc) right / 1px 100% no-repeat; }
th:first-child { padding-left: 5px; }
.sort { position: absolute; left: 125px; top: 1px; width: 8px; height: 4px; }
td { height: 21px; padding: 0 6px; }
tbody::before { content: ""; display: block; height: 10px; }
td:first-child { padding-left: 6px; color: #000; }
.fname { display: flex; align-items: center; gap: 4px; }
td.num { text-align: right; padding-right: 8px; }
.status { height: 23px; display: flex; align-items: center; color: #1e395b; padding: 0 4px 0 14px; }
.status span { padding-right: 10px; border-right: 1px solid #ececec; line-height: 12px; }
.views { margin-left: auto; display: flex; }
.views button { width: 22px; height: 23px; display: grid; place-items: center; }
.views .on { background: #cbe8f6; border: 1px solid #26a0da; }

.notepad { position: absolute; display: flex; flex-direction: column; padding: 0 7px 7px; background: #ebebeb; border: 1px solid #c9c9c9; }
.back { left: 294px; top: 252px; width: 620px; height: 413px; }
.front { left: 35px; top: 402px; width: 611px; height: 105px; background: #dd8085; border-color: #a9636a; box-shadow: 0 0 4px #0003; }
.notepad header { display: grid; grid-template-columns: 1fr auto 1fr; height: 30px; flex: none; }
.notepad header .i18 { margin: 6px 0 0 2px; }
.notepad h2 { align-self: center; }
.front h2 { color: #4a2427; }
.notepad .winbtns { margin-right: -1px; }
.menu { display: flex; flex: none; gap: 15px; height: 20px; padding: 0 6px; background: #f5f6f7; border: 1px solid #d9d9d9; border-bottom-color: #e8e8e8; color: #6d6d6d; }
.front .menu { border-color: #b86b70 #b86b70 #e8e8e8; color: #000; }
.edit { flex: 1; position: relative; display: grid; grid-template: 1fr 17px / 1fr 17px; padding: 1px; background: #fff; border: 1px solid #7eb4ea; min-height: 0; color: #b9b9b9; }
.front .edit { border-color: #569de5; }
.edit textarea { resize: none; border: 0; outline: 0; margin: 0; padding: 3px 5px; overflow: hidden; background: #fff; color: #000; font: 13px/15px "DejaVu Sans Mono", "Liberation Mono", monospace; width: 100%; height: 100%; }
.front textarea { padding-left: 158px; }
.cursor { position: absolute; left: 14px; top: 3px; width: 1px; height: 17px; background: #000; }
.vs, .hs, .corner { background: #f0f0f0; display: flex; align-items: center; justify-content: space-between; padding: 4px; }
.vs { flex-direction: column; }
.corner { justify-content: center; padding: 0; }
.marker { position: absolute; left: 291px; top: 245px; width: 549px; height: 125px; border: 5px solid #ed1c24; }
.cover { position: absolute; z-index: 2; left: 883px; top: 647px; width: 362px; height: 103px; background: #fff; clip-path: polygon(0 0, 100% 0, 100% 85px, 341px 85px, 341px 103px, 324px 85px, 0 85px); }

.taskbar { flex: none; display: flex; height: 40px; color: #fff; background-color: #60363e; background-image: radial-gradient(circle, #a9808c 0, #a9808c00 2px), radial-gradient(circle, #8f6674 0, #8f667400 1px), linear-gradient(90deg, #57302f, #603640 25%, #6b3e49 50%, #5f3340 75%, #573034); background-size: 131px 29px, 37px 17px, 100% 100%; }
.tasks { display: flex; gap: 4px; }
.tasks button { width: 50px; height: 38px; margin-top: 1px; display: grid; place-items: center; border: 1px solid transparent; }
.tasks .start { width: 48px; }
.tasks svg { width: 32px; height: 32px; }
.tasks .run { background: #ffffff2a; border-color: #b8979d; }
.tasks .focus { background: #ffffff66; border-color: #fff; }
.tasks .stack { padding-right: 4px; box-shadow: inset -3px 0 #80606899, inset -4px 0 #d9c5c8; }
.tasks .focus.stack { box-shadow: inset -3px 0 #80606899, inset -5px 0 #fff; }
.tray { position: relative; flex: 1; display: flex; align-items: center; padding-left: 10px; }
.plug { width: 18px; height: 26px; }
.battery { width: 42px; height: 24px; margin-left: 2px; border: 2px solid #fff; outline: 1px solid #333; outline-offset: -3px; background: #0cc968; text-align: center; font: 13px/20px "Liberation Sans", sans-serif; box-shadow: 4px 0 0 -2px #fff; }
.icons { display: flex; gap: 8px; margin-left: 9px; position: relative; z-index: 1; }
.icons svg { width: 16px; height: 16px; }
.clock { flex: 1; display: flex; flex-direction: column; align-items: center; line-height: 17px; }
.wall { position: absolute; left: 150px; top: 0; width: 140px; color: #b58b97; font: 17px/20px Lato, sans-serif; font-weight: 300; }
.wall small { display: block; font-size: 11px; line-height: 12px; padding-left: 44px; }
```
